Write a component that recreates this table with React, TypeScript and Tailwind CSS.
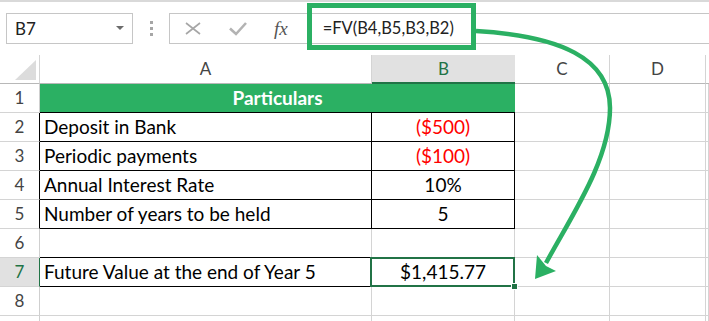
import React from 'react';

// Worksheet: FV example with formula bar and a callout arrow
const font = "font-['Lato','Liberation_Sans',sans-serif]";

const GREEN = '#2bb063';

type DataRow = { n: number; label: string; value: string; red?: boolean };

const dataRows: DataRow[] = [
  { n: 2, label: 'Deposit in Bank', value: '($500)', red: true },
  { n: 3, label: 'Periodic payments', value: '($100)', red: true },
  { n: 4, label: 'Annual Interest Rate', value: '10%' },
  { n: 5, label: 'Number of years to be held', value: '5' },
];

function RowHead({ n, edge = 'border-r-[#cfcfcf]', active = false }: { n?: number; edge?: string; active?: boolean }) {
  return (
    <div
      className={`flex items-center justify-center border-r border-b border-b-[#d4d4d4] text-[17px] ${edge} ${
        active ? 'bg-[#e1e1e1] text-[#217346]' : 'text-[#444]'
      }`}
    >
      {n}
    </div>
  );
}

function Blank() {
  return <div className="border-r border-b border-[#d4d4d4]" />;
}

function Toolbar() {
  return (
    <div className="relative h-[55px] border-t-2 border-[#d9d9d9] bg-white">
      <div className="flex items-start pt-[11px]">
        {/* Name box */}
        <div className="ml-[6px] flex h-[31px] w-[127px] items-center justify-between border border-[#c6c6c6] pl-[8px] pr-[8px]">
          <span className="text-[17px] text-[#222]">B7</span>
          <svg width="8" height="5" viewBox="0 0 8 5">
            <polygon points="0,0 8,0 4,4" fill="#6b6b6b" />
          </svg>
        </div>

        {/* Grip dots */}
        <div className="ml-[17px] mt-[8px] flex flex-col gap-[3px]">
          <div className="h-[3px] w-[3px] bg-[#a6a6a6]" />
          <div className="h-[3px] w-[3px] bg-[#a6a6a6]" />
          <div className="h-[3px] w-[3px] bg-[#a6a6a6]" />
        </div>

        {/* Formula bar */}
        <div className="ml-[16px] flex h-[31px] flex-1 items-center border border-r-0 border-[#c6c6c6]">
          <svg width="16" height="13" viewBox="0 0 16 13" className="ml-[15px]">
            <path d="M1 1 L15 12 M15 1 L1 12" stroke="#a6a6a6" strokeWidth="1.6" />
          </svg>
          <svg width="18" height="14" viewBox="0 0 18 14" className="ml-[28px]">
            <path d="M1 6.5 L7 12 L17 1" stroke="#b3b3b3" strokeWidth="2.6" fill="none" />
          </svg>
          <span className="ml-[27px] font-['Liberation_Serif',serif] text-[19px] italic leading-none text-[#555]">
            fx
          </span>
          <span className="ml-[35px] text-[16.5px] text-[#222]">=FV(B4,B5,B3,B2)</span>
        </div>
      </div>

      {/* Highlight around the formula */}
      <div className="absolute left-[307px] top-[1px] h-[47px] w-[169px] border-[5px] border-[#2bb063]" />
    </div>
  );
}

export default function App() {
  return (
    <div className={`relative h-[321px] w-[709px] overflow-hidden bg-white ${font}`}>
      <Toolbar />

      <div className="grid grid-cols-[40px_332px_143px_95px_96px_1fr] auto-rows-[29px]">
        {/* Column headers */}
        <div className="relative border-r border-r-[#d4d4d4] border-b border-b-[#b8b8b8]">
          <svg width="22" height="21" viewBox="0 0 22 21" className="absolute left-[15px] top-[5px]">
            <polygon points="21,0 21,20 0,20" fill="#dcdcdc" />
          </svg>
        </div>
        <div className="flex items-center justify-center border-r border-r-[#d4d4d4] border-b border-b-[#b8b8b8] text-[17px] text-[#444]">
          A
        </div>
        <div className="flex items-center justify-center border-b-2 border-[#217346] bg-[#e1e1e1] text-[17px] text-[#217346]">
          B
        </div>
        <div className="flex items-center justify-center border-r border-r-[#d4d4d4] border-b border-b-[#b8b8b8] text-[17px] text-[#444]">
          C
        </div>
        <div className="flex items-center justify-center border-r border-r-[#d4d4d4] border-b border-b-[#b8b8b8] text-[17px] text-[#444]">
          D
        </div>
        <div className="border-b border-b-[#b8b8b8]" />

        {/* Row 1: merged title */}
        <RowHead n={1} />
        <div
          className="col-span-2 flex items-center justify-center border-b border-black text-[19px] font-bold text-white"
          style={{ backgroundColor: GREEN }}
        >
          Particulars
        </div>
        <Blank />
        <Blank />
        <Blank />

        {/* Rows 2-5 */}
        {dataRows.map((r) => (
          <React.Fragment key={r.n}>
            <RowHead n={r.n} edge="border-r-black" />
            <div className="flex items-center border-r border-b border-black pl-[4px] text-[19px] text-black">
              {r.label}
            </div>
            <div
              className={`flex items-center justify-center border-r border-b border-black text-[19px] ${
                r.red ? 'text-[#ff0000]' : 'text-black'
              }`}
            >
              {r.value}
            </div>
            <Blank />
            <Blank />
            <Blank />
          </React.Fragment>
        ))}

        {/* Row 6 */}
        <RowHead n={6} />
        <div className="border-r border-r-[#d4d4d4] border-b border-b-black" />
        <Blank />
        <Blank />
        <Blank />
        <Blank />

        {/* Row 7: result */}
        <RowHead n={7} edge="border-r-[#217346]" active />
        <div className="flex items-center border-b border-black pl-[4px] text-[19px] text-black">
          Future Value at the end of Year 5
        </div>
        <div className="relative flex items-center justify-center border-r border-b border-[#d4d4d4] text-[19px] text-black">
          $1,415.77
          <div className="absolute -left-[2px] -top-[1px] -right-[1px] -bottom-[1px] border-2 border-[#217346]" />
          <div className="absolute -right-[4px] -bottom-[4px] h-[7px] w-[7px] border border-white bg-[#217346]" />
        </div>
        <Blank />
        <Blank />
        <Blank />

        {/* Row 8 */}
        <RowHead n={8} />
        <Blank />
        <Blank />
        <Blank />
        <Blank />
        <Blank />

        {/* Partial row below the fold */}
        <RowHead />
        <Blank />
        <Blank />
        <Blank />
        <Blank />
        <Blank />
      </div>

      {/* Callout arrow from the formula to the result */}
      <svg
        className="pointer-events-none absolute left-0 top-0"
        width="709"
        height="321"
        viewBox="0 0 709 321"
      >
        <path
          d="M476 31 C 560 36, 610 58, 610 108 C 610 160, 572 215, 546 263"
          stroke={GREEN}
          strokeWidth="4.5"
          fill="none"
        />
        <polygon points="535,279 537,255 546,266 556,271" fill={GREEN} />
      </svg>
    </div>
  );
}
